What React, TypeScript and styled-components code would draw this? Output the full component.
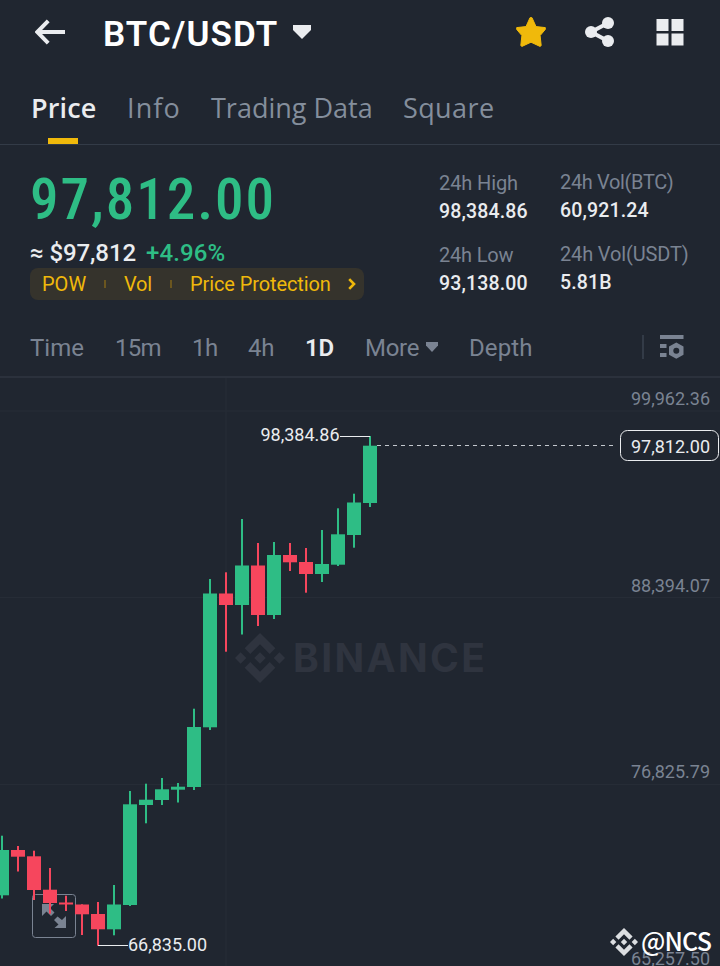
import React from "react";
import styled, { createGlobalStyle } from "styled-components";

const color = {
  bg: "#202630",
  line: "#333b47",
  text: "#eaecef",
  muted: "#848e9c",
  dim: "#7a8392",
  green: "#2ebd85",
  red: "#f6465d",
  gold: "#f0b90b",
};

const GlobalStyle = createGlobalStyle`
  *, *::before, *::after { box-sizing: border-box; }
  body { margin: 0; background: ${color.bg}; overflow: hidden; }
  svg { display: block; flex: none; }
`;

const Screen = styled.main`
  width: 720px;
  height: 966px;
  overflow: hidden;
  display: flex;
  flex-direction: column;
  background: ${color.bg};
  color: ${color.text};
  font-family: "Open Sans", "Noto Sans", sans-serif;
  white-space: nowrap;
`;

const Header = styled.header`
  display: flex;
  align-items: center;
  height: 80px;
  padding: 0 36px 16px 35px;
`;

const Pair = styled.h1`
  margin: 6px 0 0 38px;
  width: 175px;
  font: 600 35px/40px Roboto, sans-serif;
  letter-spacing: 1.1px;
  color: #fff;
`;

const PairCaret = styled.span`
  margin-left: 15px;
`;

const Actions = styled.div`
  display: flex;
  align-items: center;
  margin-left: auto;
`;

const Action = styled.span<{ $gap: number }>`
  margin-right: ${(p) => p.$gap}px;
`;

const Tabs = styled.nav`
  display: flex;
  height: 65px;
  padding-left: 31px;
  border-bottom: 1px solid ${color.line};
`;

const Tab = styled.div<{ $width: number; $track: number; $active?: boolean }>`
  display: flex;
  flex-direction: column;
  justify-content: space-between;
  align-items: flex-start;
  width: ${(p) => p.$width}px;
  padding-top: 8px;
  font-size: 27px;
  line-height: 40px;
  font-weight: ${(p) => (p.$active ? 600 : 500)};
  letter-spacing: ${(p) => p.$track}px;
  color: ${(p) => (p.$active ? color.text : color.muted)};
`;

const Indicator = styled.i`
  width: 30px;
  height: 6px;
  margin-left: 17px;
  background: ${color.gold};
`;

const Ticker = styled.section`
  display: flex;
  height: 171px;
  padding: 0 24px 0 30px;
`;

const Quote = styled.div`
  width: 409px;
  padding-top: 23px;
`;

const LastPrice = styled.div`
  font: 500 57px/64px Roboto, sans-serif;
  font-stretch: 87.5%;
  letter-spacing: 2px;
  color: ${color.green};
`;

const SubPrice = styled.div`
  display: flex;
  gap: 11px;
  margin: 7px 0 1px;
  font: 500 24px/28px Roboto, sans-serif;
  letter-spacing: -0.1px;
`;

const Fiat = styled.span`
  width: 105px;
`;

const Change = styled.span`
  color: ${color.green};
  letter-spacing: 0.1px;
`;

const Tags = styled.div`
  display: flex;
  align-items: center;
  width: 334px;
  height: 32px;
  padding: 0 8px 0 12px;
  border-radius: 8px;
  background: #35332c;
  color: ${color.gold};
  font: 400 20px/32px Roboto, sans-serif;
`;

const Tag = styled.span<{ $width: number; $track: number }>`
  width: ${(p) => p.$width}px;
  letter-spacing: ${(p) => p.$track}px;
`;

const TagRule = styled.i<{ $gap: number }>`
  width: 2px;
  height: 8px;
  margin: 0 ${(p) => p.$gap}px 0 18px;
  background: #6b561f;
`;

const TagArrow = styled.span`
  margin-left: auto;
`;

const StatColumn = styled.div<{ $width: number; $top: number }>`
  display: flex;
  flex-direction: column;
  gap: 14px;
  width: ${(p) => p.$width}px;
  padding-top: ${(p) => p.$top}px;
`;

const Stat = styled.div`
  height: 58px;
`;

const StatLabel = styled.div<{ $track: number }>`
  font: 400 20px/28px Roboto, sans-serif;
  letter-spacing: ${(p) => p.$track}px;
  color: ${color.dim};
`;

const StatValue = styled.div`
  padding-top: 1px;
  font: 500 19.5px/28px Roboto, sans-serif;
  letter-spacing: 0.15px;
`;

const Periods = styled.nav`
  display: flex;
  align-items: center;
  height: 62px;
  padding: 2px 36px 0 30px;
  border-bottom: 2px solid #2b313c;
  font: 400 24px/32px Roboto, sans-serif;
  color: ${color.dim};
`;

const Period = styled.span<{ $width: number; $track: number; $active?: boolean }>`
  width: ${(p) => p.$width}px;
  padding-top: 2px;
  letter-spacing: ${(p) => p.$track}px;
  ${(p) => p.$active && `color: ${color.text}; font-weight: 600;`}
`;

const MoreCaret = styled.span`
  width: 43px;
`;

const ToolRule = styled.i`
  width: 2px;
  height: 24px;
  margin-left: auto;
  margin-right: 16px;
  background: #333b47;
`;

type Candle = [x: number, high: number, top: number, bottom: number, low: number, up: 0 | 1];

const candles: Candle[] = [
  [2, 835.7, 850, 895.3, 898.5, 1],
  [18, 846, 850, 856.7, 871.5, 0],
  [34, 850.7, 856.3, 890, 900, 0],
  [50, 868, 889.7, 903, 913.7, 0],
  [66, 895.7, 902.5, 904.5, 911, 0],
  [82, 904.3, 904.5, 914.3, 935, 0],
  [98, 902, 914, 929.3, 945.7, 0],
  [114, 885, 904.5, 929.3, 935.3, 1],
  [130, 791, 804.3, 905, 906, 1],
  [146, 783.7, 799.7, 805, 823.3, 1],
  [162, 778, 789.3, 800, 805, 1],
  [178, 783, 786.7, 789.7, 802.5, 1],
  [194, 708.7, 727, 787, 790, 1],
  [210, 579, 593.5, 727.3, 730, 1],
  [226, 572.3, 593.5, 605, 651.7, 0],
  [242, 519, 565.5, 605, 634.5, 1],
  [258, 543, 565.5, 615, 626, 0],
  [274, 542, 555, 615, 619, 1],
  [290, 543, 555, 562.3, 571, 0],
  [306, 548, 562, 574, 592.7, 0],
  [322, 530, 564, 574, 582, 1],
  [338, 508.3, 534.3, 564.7, 566, 1],
  [354, 493.7, 502.5, 535, 547.7, 1],
  [370, 436, 445.7, 503, 507, 1],
];

const Chart = styled.svg`
  font-family: Roboto, sans-serif;
  font-size: 18px;
`;

const AxisText = styled.text`
  fill: ${color.dim};
`;

const MarkText = styled.text`
  fill: ${color.text};
`;

const Watermark = styled.text`
  font: 700 39px Inter, sans-serif;
  fill: #2f343f;
`;

const Signature = styled.text`
  font: 500 25px "Noto Sans CJK SC", sans-serif;
  fill: #fff;
`;

const BinanceMark = ({ x, y, size, fill }: { x: number; y: number; size: number; fill: string }) => (
  <svg x={x} y={y} width={size} height={size} viewBox="0 0 126.61 126.61" fill={fill}>
    <path d="M38.73 53.2l24.59-24.58 24.6 24.6 14.3-14.31L63.32 0 24.43 38.9l14.3 14.3zM0 63.31l14.3-14.31 14.31 14.31-14.31 14.3L0 63.31zm38.73 10.11l24.59 24.59 24.6-24.6 14.31 14.29-38.9 38.91-38.91-38.88-.02-.02 14.33-14.29zM98 63.31l14.3-14.31 14.31 14.3-14.31 14.32L98 63.31zM77.83 63.3L63.32 48.78 52.59 59.51l-1.24 1.23-2.54 2.54 14.51 14.52 14.51-14.5z" />
  </svg>
);

const tabs = [
  { label: "Price", width: 96, track: 0.15, active: true },
  { label: "Info", width: 84, track: 1.1 },
  { label: "Trading Data", width: 192, track: 0 },
  { label: "Square", width: 100, track: 0.4 },
];

export default function App() {
  return (
    <Screen>
      <GlobalStyle />
      <Header>
        <svg width="30" height="26" viewBox="0 0 30 26" fill="none" stroke={color.text} strokeWidth="4">
          <path d="M30 13H3M13.2 1.8 2.2 13l11 11.2" />
        </svg>
        <Pair>BTC/USDT</Pair>
        <PairCaret>
          <svg width="18" height="14" viewBox="0 0 18 14" fill={color.text}>
            <path d="M0 0h18v5L9 14 0 5z" />
          </svg>
        </PairCaret>
        <Actions>
          <Action $gap={39}>
            <svg width="30" height="30" viewBox="0 0 30 30" fill={color.gold} stroke={color.gold} strokeLinejoin="round">
              <path d="M14 .7h2l4 8.9 9.3 1v1.8l-5.2 6.2 1.1 10-1.2.8-9-4.2-9 4.2-1.2-.8 1.1-10L.7 12.4v-1.8l9.3-1z" />
            </svg>
          </Action>
          <Action $gap={41}>
            <svg width="30" height="30" viewBox="0 0 30 30" fill={color.text}>
              <path d="M6 15 23 6M6 15l17 9" stroke={color.text} strokeWidth="4" />
              <circle cx="6" cy="15" r="6" />
              <circle cx="23" cy="6" r="6" />
              <circle cx="23" cy="24" r="6" />
            </svg>
          </Action>
          <Action $gap={0}>
            <svg width="28" height="28" viewBox="0 0 28 28" fill={color.text}>
              <path d="M.5 1h12v12h-12zM15.5 1h12v12h-12zM.5 15.5h12v12h-12zM15.5 15.5h12v12h-12z" />
            </svg>
          </Action>
        </Actions>
      </Header>
      <Tabs>
        {tabs.map((t) => (
          <Tab key={t.label} $width={t.width} $track={t.track} $active={t.active}>
            {t.label}
            {t.active && <Indicator />}
          </Tab>
        ))}
      </Tabs>
      <Ticker>
        <Quote>
          <LastPrice>97,812.00</LastPrice>
          <SubPrice>
            <Fiat>≈ $97,812</Fiat>
            <Change>+4.96%</Change>
          </SubPrice>
          <Tags>
            <Tag $width={44} $track={0}>POW</Tag>
            <TagRule $gap={18} />
            <Tag $width={28} $track={-0.2}>Vol</Tag>
            <TagRule $gap={18} />
            <Tag $width={142} $track={-0.1}>Price Protection</Tag>
            <TagArrow>
              <svg width="8" height="12" viewBox="0 0 8 12" fill="none" stroke={color.gold} strokeWidth="2.6">
                <path d="M1.2 1.2 6 6l-4.8 4.8" />
              </svg>
            </TagArrow>
          </Tags>
        </Quote>
        <StatColumn $width={121} $top={24}>
          <Stat>
            <StatLabel $track={-0.1}>24h High</StatLabel>
            <StatValue>98,384.86</StatValue>
          </Stat>
          <Stat>
            <StatLabel $track={-0.2}>24h Low</StatLabel>
            <StatValue>93,138.00</StatValue>
          </Stat>
        </StatColumn>
        <StatColumn $width={136} $top={23}>
          <Stat>
            <StatLabel $track={-0.35}>24h Vol(BTC)</StatLabel>
            <StatValue>60,921.24</StatValue>
          </Stat>
          <Stat>
            <StatLabel $track={-0.15}>24h Vol(USDT)</StatLabel>
            <StatValue>5.81B</StatValue>
          </Stat>
        </StatColumn>
      </Ticker>
      <Periods>
        <Period $width={85} $track={0}>Time</Period>
        <Period $width={77} $track={-0.7}>15m</Period>
        <Period $width={56} $track={-0.6}>1h</Period>
        <Period $width={57} $track={-0.2}>4h</Period>
        <Period $width={60} $track={-0.2} $active>1D</Period>
        <Period $width={61} $track={-0.3}>More</Period>
        <MoreCaret>
          <svg width="12" height="10" viewBox="0 0 12 10" fill={color.dim}>
            <path d="M0 0h12v3.5L6 10 0 3.5z" />
          </svg>
        </MoreCaret>
        <Period $width={70} $track={0.1}>Depth</Period>
        <ToolRule />
        <svg width="24" height="24" viewBox="0 0 24 24" fill={color.dim}>
          <path d="M0 0h23.5v4H0zM0 9h6.5v4H0zM0 18h6.5v4H0z" />
          <path fillRule="evenodd" d="m16.3 7.5 7.2 4v8.2l-7.2 4.1-7.3-4.1v-8.2zm0 5.2a3 3 0 1 0 0 6 3 3 0 0 0 0-6z" />
        </svg>
      </Periods>
      <Chart width="720" height="588" viewBox="0 378 720 588">
        <path d="M0 411h720M0 597.5h720M0 784.5h720M226 378v588" stroke="#262c36" />
        <BinanceMark x={235} y={633} size={50} fill="#2f343f" />
        <Watermark x="293" y="672" textLength="192">BINANCE</Watermark>
        <g fill={color.dim}>
          <rect x="32.5" y="894.5" width="43" height="43" rx="3" fill="none" stroke={color.dim} />
          <path d="M42 904h12l-4 4 4.5 4.5-3.5 3.5-4.5-4.5-4.5 4.5zM66 928V916l-4 4-4.5-3.5-3.5 3.5 4.5 4.5-4 3.5z" />
        </g>
        {candles.map(([x, high, top, bottom, low, up]) => (
          <g key={x} fill={up ? color.green : color.red}>
            <rect x={x - 1} y={high} width="2" height={low - high} />
            <rect x={x - 7} y={top} width="14" height={bottom - top} />
          </g>
        ))}
        <path d="M340 436.5h30M98 945.5h30" stroke={color.text} />
        <path d="M377 445.5h236" stroke="#c4c8ce" strokeDasharray="4 4" />
        <MarkText x="260.5" y="441" textLength="79">98,384.86</MarkText>
        <MarkText x="128" y="951" textLength="79">66,835.00</MarkText>
        <AxisText x="631" y="405" textLength="79">99,962.36</AxisText>
        <AxisText x="631" y="592" textLength="79">88,394.07</AxisText>
        <AxisText x="631" y="778" textLength="79">76,825.79</AxisText>
        <AxisText x="631" y="965" textLength="79">65,257.50</AxisText>
        <rect x="620.5" y="430.5" width="98" height="30" rx="7" fill={color.bg} stroke={color.text} />
        <MarkText x="631" y="453" textLength="79">97,812.00</MarkText>
        <BinanceMark x={610} y={928} size={28} fill="#dcdee1" />
        <Signature x="641" y="951" textLength="71">@NCS</Signature>
      </Chart>
    </Screen>
  );
}
